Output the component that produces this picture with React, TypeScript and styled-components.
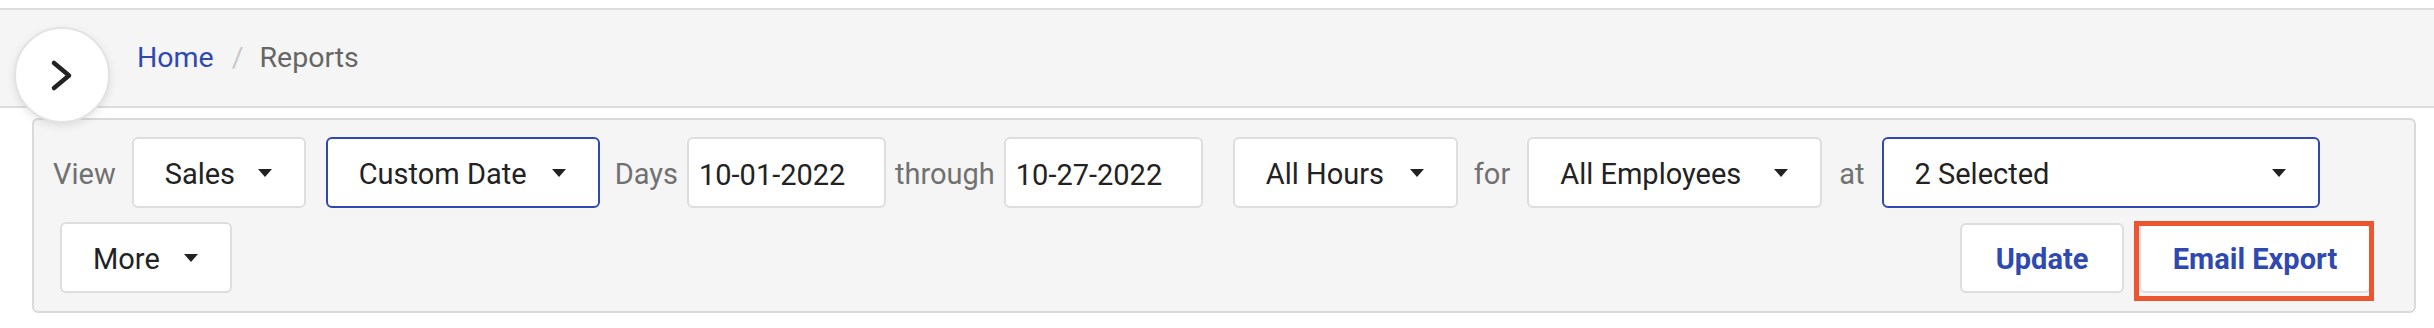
import React from "react";
import styled, { createGlobalStyle } from "styled-components";

const Global = createGlobalStyle`
  html, body { margin: 0; padding: 0; background: #ffffff; }
  body { font-family: Roboto, "Liberation Sans", Arial, sans-serif; }
  * { box-sizing: border-box; }
`;

const Page = styled.div`
  position: relative;
  width: 2434px;
  height: 328px;
  padding-top: 8px;
`;

const Header = styled.header`
  height: 100px;
  background: #f5f5f5;
  border-top: 2px solid #dcdcdc;
  border-bottom: 2px solid #dcdcdc;
  display: flex;
  align-items: center;
  padding-left: 137px;
  padding-bottom: 2px;
`;

const Crumbs = styled.nav`
  display: flex;
  align-items: center;
  font-size: 28.5px;
`;

const CrumbLink = styled.a`
  color: #2f49b0;
  text-decoration: none;
`;

const CrumbSep = styled.span`
  color: #c9c9c9;
  margin: 0 16px 0 18px;
`;

const CrumbCurrent = styled.span`
  color: #666666;
`;

const ToggleCircle = styled.button`
  position: absolute;
  left: 14px;
  top: 27px;
  width: 96px;
  height: 96px;
  border-radius: 50%;
  background: #ffffff;
  border: 2px solid #e3e3e3;
  box-shadow: 0 3px 8px rgba(0, 0, 0, 0.1);
  padding: 0;
  z-index: 2;
`;

const Panel = styled.section`
  margin: 10px 18px 0 32px;
  background: #f5f5f5;
  border: 2px solid #dadada;
  border-radius: 6px;
  padding: 17px 0 18px 19px;
  display: flex;
  flex-direction: column;
  gap: 14px;
`;

const Row = styled.div<{ $split?: boolean }>`
  display: flex;
  align-items: center;
  justify-content: ${(p) => (p.$split ? "space-between" : "flex-start")};
  padding-right: ${(p) => (p.$split ? "43px" : "0")};
`;

const Group = styled.div<{ $gap?: number }>`
  display: flex;
  align-items: center;
  gap: ${(p) => p.$gap ?? 0}px;
`;

const Label = styled.span<{ $ml?: number; $mr?: number }>`
  font-size: 29px;
  color: #717171;
  padding-top: 3px;
  margin-left: ${(p) => p.$ml ?? 0}px;
  margin-right: ${(p) => p.$mr ?? 0}px;
  white-space: nowrap;
`;

const Select = styled.button<{ $w: number; $active?: boolean; $ml?: number; $mr?: number }>`
  width: ${(p) => p.$w}px;
  height: 71px;
  background: #ffffff;
  border: 2px solid ${(p) => (p.$active ? "#2f49b0" : "#dedede")};
  border-radius: 6px;
  padding: 3px 32px 0 31px;
  margin-left: ${(p) => p.$ml ?? 0}px;
  margin-right: ${(p) => p.$mr ?? 0}px;
  display: flex;
  align-items: center;
  justify-content: space-between;
  gap: 20px;
  font-family: inherit;
  font-size: 29px;
  color: #222222;
  white-space: nowrap;
  flex-shrink: 0;
`;

const Caret = styled.span`
  width: 0;
  height: 0;
  margin-top: -3px;
  border-left: 7px solid transparent;
  border-right: 7px solid transparent;
  border-top: 8px solid #222222;
  flex-shrink: 0;
`;

const DateInput = styled.input<{ $ml?: number; $mr?: number }>`
  width: 199px;
  height: 71px;
  background: #ffffff;
  border: 2px solid #dedede;
  border-radius: 6px;
  padding: 4px 10px 0;
  margin-left: ${(p) => p.$ml ?? 0}px;
  margin-right: ${(p) => p.$mr ?? 0}px;
  font-family: inherit;
  font-size: 29px;
  color: #222222;
  flex-shrink: 0;
`;

const ActionButton = styled.button<{ $w: number; $highlight?: boolean }>`
  position: relative;
  width: ${(p) => p.$w}px;
  height: 70px;
  background: #ffffff;
  border: 2px solid #dedede;
  border-radius: 6px;
  padding-top: 3px;
  font-family: inherit;
  font-size: 29px;
  font-weight: 700;
  color: #2f49b0;
  white-space: nowrap;
  &::after {
    content: "";
    display: ${(p) => (p.$highlight ? "block" : "none")};
    position: absolute;
    left: -7px;
    right: -5px;
    top: -4px;
    bottom: -10px;
    border: 5px solid #eb5630;
    pointer-events: none;
  }
`;

const Chevron = () => (
  <svg width="96" height="96" viewBox="0 0 96 96" style={{ position: "absolute", left: -2, top: -2 }}>
    <path d="M40 36 L55 48.5 L40 61" fill="none" stroke="#222222" strokeWidth="4.5" strokeLinecap="round" strokeLinejoin="round" />
  </svg>
);

export default function App() {
  return (
    <Page>
      <Global />
      <ToggleCircle aria-label="Expand">
        <Chevron />
      </ToggleCircle>
      <Header>
        <Crumbs>
          <CrumbLink href="#">Home</CrumbLink>
          <CrumbSep>/</CrumbSep>
          <CrumbCurrent>Reports</CrumbCurrent>
        </Crumbs>
      </Header>
      <Panel>
        <Row>
          <Label $mr={16}>View</Label>
          <Select $w={174} $mr={20}>
            Sales <Caret />
          </Select>
          <Select $w={274} $active $mr={15}>
            Custom Date <Caret />
          </Select>
          <Label $mr={9}>Days</Label>
          <DateInput defaultValue="10-01-2022" $mr={9} />
          <Label $mr={9}>through</Label>
          <DateInput defaultValue="10-27-2022" $mr={30} />
          <Select $w={225} $mr={16}>
            All Hours <Caret />
          </Select>
          <Label $mr={17}>for</Label>
          <Select $w={295} $mr={17}>
            All Employees <Caret />
          </Select>
          <Label $mr={17}>at</Label>
          <Select $w={438} $active>
            2 Selected <Caret />
          </Select>
        </Row>
        <Row $split>
          <Select $w={172} $ml={7}>
            More <Caret />
          </Select>
          <Group $gap={15}>
            <ActionButton $w={164}>Update</ActionButton>
            <ActionButton $w={232} $highlight>
              Email Export
            </ActionButton>
          </Group>
        </Row>
      </Panel>
    </Page>
  );
}
